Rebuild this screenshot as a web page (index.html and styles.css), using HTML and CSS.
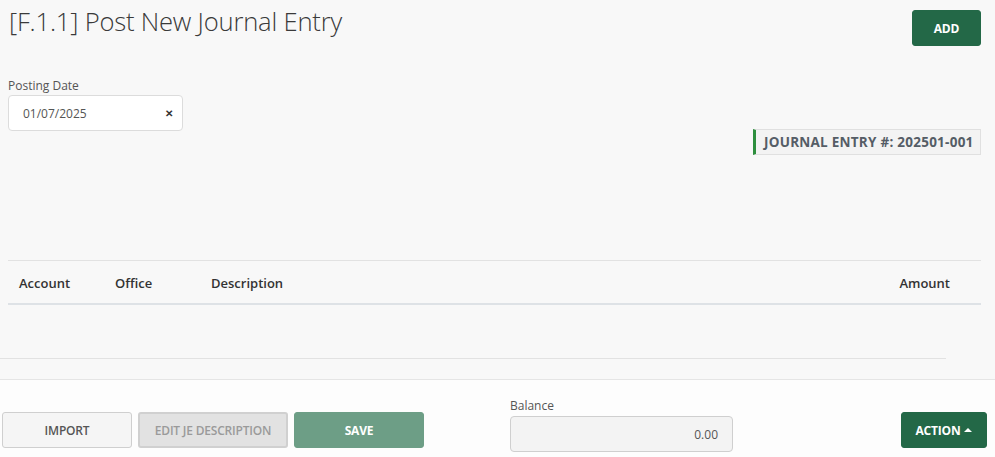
FILE: index.html
```html
<!DOCTYPE html>
<html lang="en">
<head>
<meta charset="utf-8">
<title>Post New Journal Entry</title>
<link rel="stylesheet" href="styles.css">
</head>
<body>
<div class="main">
  <div class="header">
    <h1 class="title">[F.1.1] Post New Journal Entry</h1>
    <button class="btn btn-primary btn-add">ADD</button>
  </div>
  <div class="field">
    <label class="label">Posting Date</label>
    <div class="date-input">
      <span class="date-value">01/07/2025</span>
      <span class="clear">&#x2715;</span>
    </div>
  </div>
  <div class="badge-row">
    <div class="je-badge">JOURNAL ENTRY #: 202501-001</div>
  </div>
  <div class="table">
    <div class="thead">
      <div class="th col-account">Account</div>
      <div class="th col-office">Office</div>
      <div class="th col-desc">Description</div>
      <div class="th col-amount">Amount</div>
    </div>
    <div class="tbody"></div>
  </div>
  <div class="scroll-line"></div>
</div>
<div class="footer">
  <button class="btn btn-light btn-import">IMPORT</button>
  <button class="btn btn-disabled btn-edit">EDIT JE DESCRIPTION</button>
  <button class="btn btn-save">SAVE</button>
  <div class="balance">
    <label class="label">Balance</label>
    <div class="balance-input">0.00</div>
  </div>
  <button class="btn btn-primary btn-action">ACTION <span class="caret"></span></button>
</div>
</body>
</html>
```

FILE: styles.css
```css
* { box-sizing: border-box; }
html, body { margin: 0; padding: 0; }
body {
  font-family: "Open Sans", "Liberation Sans", sans-serif;
  background: #fdfdfd;
  color: #333;
  width: 995px;
  height: 457px;
  overflow: hidden;
}
.main {
  background: #f8f8f8;
  height: 379px;
  padding: 10px 14px 0 8px;
  display: flex;
  flex-direction: column;
}
.header {
  display: flex;
  justify-content: space-between;
  align-items: flex-start;
}
.title {
  margin: 0;
  font-weight: 300;
  font-size: 25.6px;
  line-height: 30px;
  color: #3a3a3a;
  margin-left: 1px;
  margin-top: -3px;
  letter-spacing: -0.2px;
}
.btn {
  font-family: "Open Sans", "Liberation Sans", sans-serif;
  font-size: 12px;
  font-weight: 600;
  height: 36px;
  border-radius: 3px;
  border: 1px solid transparent;
  padding: 0;
  cursor: pointer;
  display: flex;
  align-items: center;
  justify-content: center;
  letter-spacing: -0.2px;
}
.btn-primary {
  background: #236847;
  color: #fff;
  border-color: #236847;
  font-weight: 700;
}
.btn-add { width: 69px; }
.field { margin-top: 32px; display: flex; flex-direction: column; }
.label {
  font-size: 12px;
  line-height: 16px;
  color: #555;
}
.date-input {
  margin-top: 1px;
  width: 175px;
  height: 36px;
  background: #fff;
  border: 1px solid #dcdcdc;
  border-radius: 4px;
  display: flex;
  align-items: center;
  justify-content: space-between;
  padding: 0 9px 0 14px;
  font-size: 12px;
  color: #555;
}
.clear { font-size: 10px; font-weight: 700; color: #333; }
.badge-row { display: flex; justify-content: flex-end; margin-top: -2px; }
.je-badge {
  width: 228px;
  height: 26px;
  background: #f3f3f3;
  border: 1px solid #e0e0e0;
  border-left: 3px solid #2e8f3e;
  font-size: 13.5px;
  font-weight: 700;
  color: #555d66;
  padding-left: 8px;
  display: flex;
  align-items: center;
  letter-spacing: 0.25px;
  white-space: nowrap;
}
.table { margin-top: 105px; }
.thead {
  display: flex;
  align-items: center;
  height: 45px;
  padding-top: 1px;
  border-top: 1px solid #e2e2e2;
  border-bottom: 2px solid #dee2e6;
  font-size: 13px;
  font-weight: 600;
  color: #333;
}
.th { padding-left: 11px; }
.col-account { width: 96px; }
.col-office { width: 96px; }
.col-desc { flex: 1; }
.col-amount { padding-right: 31px; }
.tbody { height: 53px; }
.scroll-line {
  margin-left: -8px;
  width: 946px;
  border-top: 1px solid #e2e2e2;
}
.footer {
  border-top: 1px solid #e5e5e5;
  height: 78px;
  display: flex;
  align-items: flex-start;
  padding: 18px 8px 0 2px;
}
.btn-light {
  background: #f5f5f5;
  border-color: #cfcfcf;
  color: #555;
}
.btn-import { width: 130px; margin-top: 14px; }
.btn-disabled {
  background: #e2e2e2;
  border: 2px solid #d0d0d0;
  color: #9a9a9a;
}
.btn-edit { width: 150px; margin-top: 14px; margin-left: 6px; }
.btn-save {
  width: 130px;
  margin-top: 14px;
  margin-left: 6px;
  background: #6d9e86;
  border-color: #6d9e86;
  color: #fff;
  font-weight: 700;
}
.balance { margin-left: 86px; display: flex; flex-direction: column; }
.balance-input {
  margin-top: 2px;
  width: 223px;
  height: 36px;
  background: #f3f3f3;
  border: 1px solid #cfcfcf;
  border-radius: 4px;
  display: flex;
  align-items: center;
  justify-content: flex-end;
  padding-right: 14px;
  font-size: 12px;
  color: #555;
}
.btn-action { width: 86px; margin-left: auto; margin-top: 14px; gap: 4px; }
.caret {
  width: 0;
  height: 0;
  border-left: 4px solid transparent;
  border-right: 4px solid transparent;
  border-bottom: 4px solid #fff;
}
```
